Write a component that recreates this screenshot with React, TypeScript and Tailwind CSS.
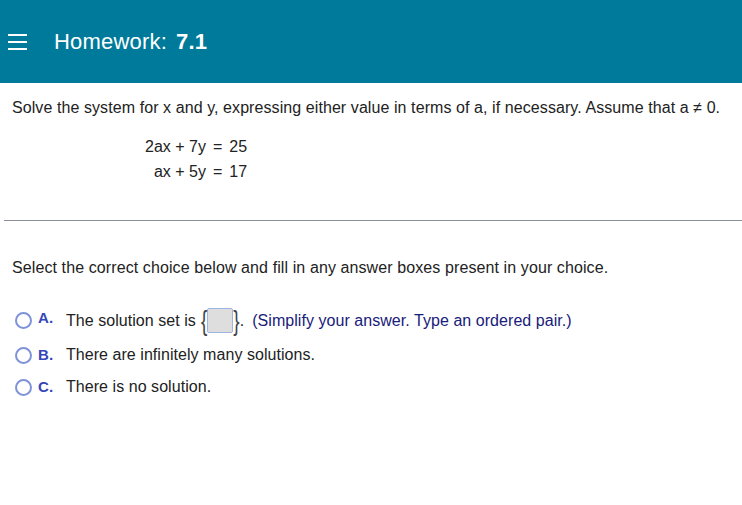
import React from 'react'

function Radio() {
  return (
    <span className="inline-block w-[17px] h-[17px] rounded-full border-[2px] border-[#7f93d9] bg-white shrink-0" />
  )
}

function Letter({ children, raised }: { children: React.ReactNode; raised?: boolean }) {
  return (
    <span
      className={
        raised
          ? 'ml-[6px] w-[28px] font-bold text-[#3546b8] text-[15px] self-start mt-[-1px]'
          : 'ml-[6px] w-[28px] font-bold text-[#3546b8] text-[15px]'
      }
    >
      {children}
    </span>
  )
}

export default function App() {
  const font = { fontFamily: '"Liberation Sans", Arial, sans-serif' }
  return (
    <div className="w-[742px] h-[505px] bg-white overflow-hidden text-[#222]" style={font}>
      {/* Header */}
      <div className="h-[83px] bg-[#007a9a] flex items-center pl-[8px]">
        <svg width="20" height="18" viewBox="0 0 20 18" className="mr-[26px]">
          <rect x="0" y="1" width="19" height="2" fill="#fff" />
          <rect x="0" y="8" width="19" height="2" fill="#fff" />
          <rect x="0" y="15" width="19" height="2" fill="#fff" />
        </svg>
        <h1 className="text-white text-[22px] leading-none tracking-[0.2px]">
          Homework:<span className="font-bold ml-[9px]">7.1</span>
        </h1>
      </div>

      {/* Question */}
      <div className="pl-[12px] pt-[15px]">
        <p className="text-[16px] leading-[20px] tracking-[0.08px]">
          Solve the system for x and y, expressing either value in terms of a, if necessary. Assume that a ≠ 0.
        </p>
        <div className="ml-[133px] mt-[16px] text-[16px] leading-[25px]">
          <div className="grid grid-cols-[auto_auto_auto] gap-x-[7px] w-max">
            <span className="text-right">2ax + 7y</span>
            <span>=</span>
            <span>25</span>
            <span className="text-right">ax + 5y</span>
            <span>=</span>
            <span>17</span>
          </div>
        </div>
      </div>

      <div className="ml-[4px] mt-[36px] h-[1px] bg-[#8a8f96]" />

      {/* Choices */}
      <div className="pl-[12px] pt-[37px]">
        <p className="text-[16px] leading-[20px] tracking-[0.1px]">
          Select the correct choice below and fill in any answer boxes present in your choice.
        </p>
        <div className="mt-[30px] flex flex-col gap-[12px] pl-[3px]">
          <div className="flex items-center h-[25px] text-[16px] tracking-[0.05px]">
            <Radio />
            <Letter raised>A.</Letter>
            <span>The solution set is</span>
            <span className="ml-[5px] flex items-center">
              <span className="inline-block text-[19px] leading-none scale-y-[1.45] text-[#444]">{'{'}</span>
              <span className="inline-block w-[26px] h-[25px] bg-[#dedede] border border-[#9db5e3] rounded-[2px]" />
              <span className="inline-block text-[19px] leading-none scale-y-[1.45] text-[#444]">{'}'}</span>
            </span>
            <span>.</span>
            <span className="ml-[8px] text-[#17207a]">(Simplify your answer. Type an ordered pair.)</span>
          </div>
          <div className="flex items-center h-[20px] text-[16px] tracking-[0.05px]">
            <Radio />
            <Letter>B.</Letter>
            <span>There are infinitely many solutions.</span>
          </div>
          <div className="flex items-center h-[20px] text-[16px] tracking-[0.05px]">
            <Radio />
            <Letter>C.</Letter>
            <span>There is no solution.</span>
          </div>
        </div>
      </div>
    </div>
  )
}
